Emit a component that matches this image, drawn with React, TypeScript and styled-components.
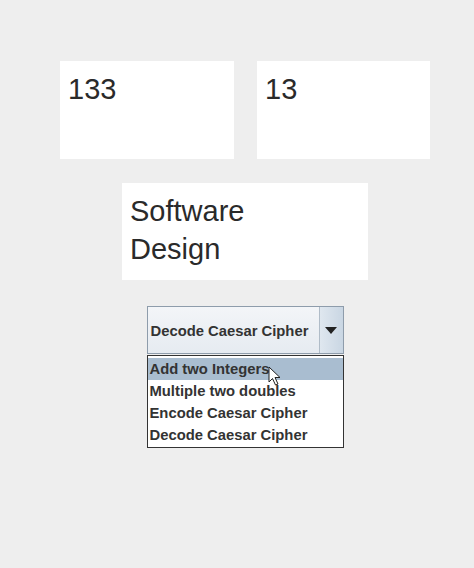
import React from 'react'
import styled, { createGlobalStyle } from 'styled-components'

const GlobalStyle = createGlobalStyle`
  html, body {
    margin: 0;
    padding: 0;
    background: #eeeeee;
  }
  body {
    font-family: "Liberation Sans", Arial, sans-serif;
  }
`

const Page = styled.div`
  width: 474px;
  height: 568px;
  box-sizing: border-box;
  padding: 61px 0 0 16px;
  display: flex;
  flex-direction: column;
  align-items: center;
  background: #eeeeee;
`

const Row = styled.div<{ $top?: number }>`
  display: flex;
  gap: 23px;
  margin-top: ${({ $top }) => $top ?? 0}px;
`

const Field = styled.div<{ $w: number; $h: number }>`
  width: ${({ $w }) => $w}px;
  height: ${({ $h }) => $h}px;
  box-sizing: border-box;
  background: #ffffff;
  padding: 9px 7px 8px 8px;
  font-size: 29px;
  line-height: 38px;
  color: #2a2a2a;
`

const Combo = styled.div`
  margin-top: 26px;
  width: 197px;
  position: relative;
`

const ComboBox = styled.div`
  height: 48px;
  box-sizing: border-box;
  display: flex;
  border: 1px solid #8e9cab;
  background: linear-gradient(#f3f5f8, #e6ebf1);
`

const ComboLabel = styled.div`
  flex: 1;
  display: flex;
  align-items: center;
  padding: 2px 0 0 3px;
  font-size: 14.8px;
  font-weight: bold;
  color: #333333;
  border-right: 1px solid #b0bcc8;
`

const ArrowButton = styled.div`
  width: 23px;
  display: flex;
  align-items: center;
  justify-content: center;
  background: linear-gradient(90deg, #dfe7ef, #c9d6e3);
`

const List = styled.div`
  margin-top: 1px;
  border: 1px solid #333333;
  background: #ffffff;
  padding: 2px 0 1px;
`

const Item = styled.div<{ $active?: boolean }>`
  height: 22px;
  line-height: 23px;
  padding-left: 2px;
  font-size: 14.8px;
  font-weight: bold;
  color: #333333;
  background: ${({ $active }) => ($active ? '#a9bdd0' : '#ffffff')};
`

const Pointer = styled.svg`
  position: absolute;
  left: 121px;
  top: 60px;
`

const items = ['Add two Integers', 'Multiple two doubles', 'Encode Caesar Cipher', 'Decode Caesar Cipher']

export default function App() {
  return (
    <>
      <GlobalStyle />
      <Page>
        <Row>
          <Field $w={174} $h={98}>133</Field>
          <Field $w={173} $h={98}>13</Field>
        </Row>
        <Row $top={24}>
          <Field $w={246} $h={97}>
            Software
            <br />
            Design
          </Field>
        </Row>
        <Combo>
          <ComboBox>
            <ComboLabel>Decode Caesar Cipher</ComboLabel>
            <ArrowButton>
              <svg width="12" height="7" viewBox="0 0 12 7">
                <path d="M0 0 H12 L6 7 Z" fill="#222" />
              </svg>
            </ArrowButton>
          </ComboBox>
          <List>
            {items.map((it, i) => (
              <Item key={it} $active={i === 0}>
                {it}
              </Item>
            ))}
          </List>
          <Pointer width="14" height="21" viewBox="0 0 14 21">
            <path
              d="M1 1 L1 16 L4.5 12.5 L7.5 19 L10 18 L7 11.5 L12 11.5 Z"
              fill="#ffffff"
              stroke="#222"
              strokeWidth="1"
              strokeLinejoin="round"
            />
          </Pointer>
        </Combo>
      </Page>
    </>
  )
}
